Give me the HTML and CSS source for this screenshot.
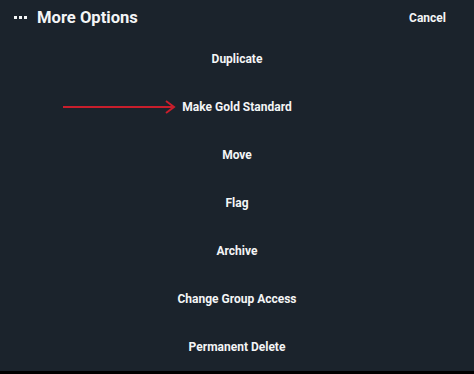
FILE: index.html
```html
<!DOCTYPE html>
<html>
<head>
    <title>More Options</title>
    <link rel="stylesheet" href="styles.css">
</head>
<body>
    <div class="sheet">
        <header>
            <div class="title">
                <span class="dots"><i></i><i></i><i></i></span>
                <h1>More Options</h1>
            </div>
            <a href="#" class="cancel">Cancel</a>
        </header>

        <ul class="options">
            <li>Duplicate</li>
            <li class="marked">
                Make Gold Standard
                <svg class="arrow" width="114" height="14" viewBox="0 0 114 14">
                    <path d="M0 7 H111" stroke="#c81e2c" stroke-width="2" fill="none"/>
                    <path d="M103 1 L111 7 L103 13" stroke="#c81e2c" stroke-width="2" fill="none"/>
                </svg>
            </li>
            <li>Move</li>
            <li>Flag</li>
            <li>Archive</li>
            <li>Change Group Access</li>
            <li>Permanent Delete</li>
        </ul>
    </div>
</body>
</html>
```

FILE: styles.css
```css
:root {
    --bg-color: #1b232c;
    --text-color: #f4f5f6;
}

* {
    margin: 0;
    padding: 0;
    box-sizing: border-box;
}

body {
    font-family: Roboto, 'Liberation Sans', sans-serif;
    background-color: #000;
    color: var(--text-color);
    height: 374px;
}

.sheet {
    background-color: var(--bg-color);
    height: 371px;
}

header {
    height: 35px;
    display: flex;
    justify-content: space-between;
    align-items: center;
    padding: 0 28px 0 14px;
}

.title {
    display: flex;
    align-items: center;
    gap: 10px;
}

.dots {
    display: flex;
    gap: 2px;
    margin-top: -1px;
}

.dots i {
    width: 3px;
    height: 3px;
    background: var(--text-color);
}

h1 {
    font-size: 16.6px;
    font-weight: 700;
}

.cancel {
    color: var(--text-color);
    text-decoration: none;
    font-size: 12px;
    font-weight: 700;
}

.options {
    list-style: none;
}

.options li {
    height: 48px;
    display: flex;
    justify-content: center;
    align-items: center;
    font-size: 12px;
    font-weight: 700;
}

.marked {
    position: relative;
}

.arrow {
    position: absolute;
    left: 63px;
    top: 17px;
}
```
